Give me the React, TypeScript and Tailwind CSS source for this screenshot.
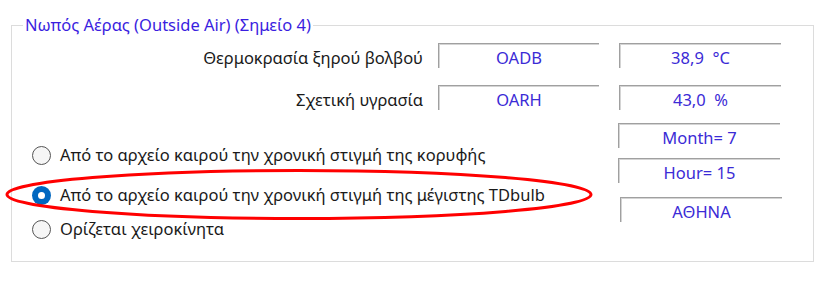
import React from 'react'

const font = { fontFamily: '"Noto Sans", "Open Sans", sans-serif' }

function ValueBox({ text, className = '' }: { text: string; className?: string }) {
  return (
    <div
      className={`flex h-[25px] items-center justify-center whitespace-pre border-l border-t border-[#a0a0a0] pt-[3px] text-[16.5px] leading-[20px] text-[#3b2bd6] shadow-[inset_1px_1px_0_#d4d4d4] ${className}`}
    >
      {text}
    </div>
  )
}

function Radio({ checked = false, label }: { checked?: boolean; label: string }) {
  return (
    <label className="flex items-center gap-[9px] text-[16.5px] leading-[20px] text-[#1a1a1a]">
      {checked ? (
        <span className="flex h-[19px] w-[19px] items-center justify-center rounded-full bg-[#0067c0]">
          <span className="h-[7px] w-[7px] rounded-full bg-white" />
        </span>
      ) : (
        <span className="h-[19px] w-[19px] rounded-full border border-[#555] bg-[#f6f6f6]" />
      )}
      {label}
    </label>
  )
}

export default function App() {
  return (
    <div className="relative h-[281px] w-[835px] bg-white pl-[11px] pt-[15px]" style={font}>
      <fieldset className="h-[247px] w-[803px] border border-[#dcdcdc] px-0">
        <legend className="ml-[11px] px-[2px] text-[16.5px] leading-[20px] text-[#3a1ee0]">
          Νωπός Αέρας (Outside Air) (Σημείο 4)
        </legend>

        <div className="flex flex-col gap-[17px] pr-[32px] pt-[8px]">
          <div className="flex h-[25px] items-center justify-end">
            <span className="mr-[15px] mt-[5px] text-[16.5px] leading-[20px] text-[#1a1a1a]">Θερμοκρασία ξηρού βολβού</span>
            <ValueBox text="OADB" className="w-[161px]" />
            <ValueBox text="38,9  °C" className="ml-[20px] w-[162px]" />
          </div>
          <div className="flex h-[25px] items-center justify-end">
            <span className="mr-[15px] mt-[5px] text-[16.5px] leading-[20px] text-[#1a1a1a]">Σχετική υγρασία</span>
            <ValueBox text="OARH" className="w-[161px]" />
            <ValueBox text="43,0  %" className="ml-[20px] w-[162px]" />
          </div>
        </div>

        <div className="mt-[12px] flex justify-between pr-[31px]">
          <div className="flex flex-col gap-[20px] pl-[20px] pt-[23px]">
            <Radio label="Από το αρχείο καιρού την χρονική στιγμή της κορυφής" />
            <div className="flex flex-col gap-[14px]">
              <Radio checked label="Από το αρχείο καιρού την χρονική στιγμή της μέγιστης TDbulb" />
              <Radio label="Ορίζεται χειροκίνητα" />
            </div>
          </div>
          <div className="flex w-[164px] flex-col pt-[1px]">
            <ValueBox text="Month= 7" className="w-[162px]" />
            <ValueBox text="Hour= 15" className="mt-[10px] w-[162px]" />
            <ValueBox text="ΑΘΗΝΑ" className="ml-[2px] mt-[14px] w-[162px]" />
          </div>
        </div>
      </fieldset>

      <svg className="pointer-events-none absolute left-0 top-0" width="835" height="281">
        <ellipse cx="299" cy="194.5" rx="292" ry="24" fill="none" stroke="#ff0000" strokeWidth="3" />
      </svg>
    </div>
  )
}
